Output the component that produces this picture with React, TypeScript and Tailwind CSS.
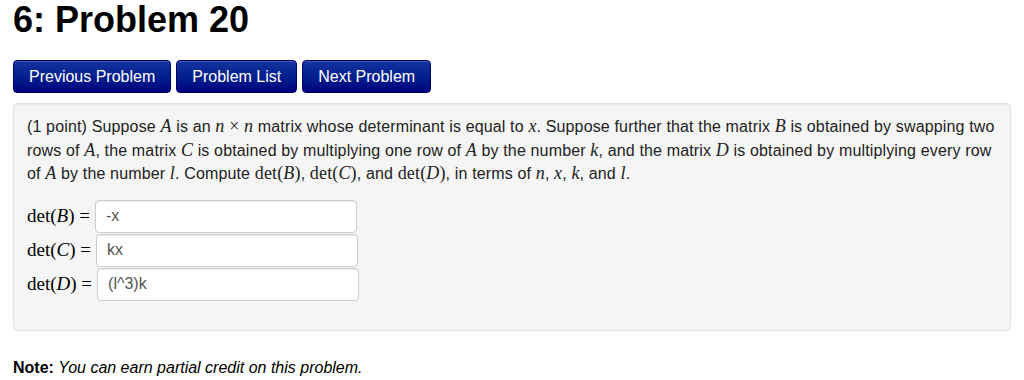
import React from 'react';

const M = ({ children }: { children: React.ReactNode }) => (
  <span className="font-['Liberation_Serif',serif] italic text-[18px]">{children}</span>
);

const R = ({ children }: { children: React.ReactNode }) => (
  <span className="font-['Liberation_Serif',serif] text-[18px]">{children}</span>
);

function Det({ v }: { v: string }) {
  return (
    <R>
      det(<M>{v}</M>)
    </R>
  );
}

function AnswerRow({ v, value }: { v: string; value: string }) {
  return (
    <div className="flex items-center">
      <span className="font-['Liberation_Serif',serif] text-[19px] text-black whitespace-nowrap mr-[5px]">
        det(<span className="italic">{v}</span>) =
      </span>
      <input
        readOnly
        value={value}
        className="w-[262px] h-[33px] bg-white border border-[#cccccc] rounded-[4px] px-[10px] text-[16px] text-[#555] font-['Liberation_Sans',sans-serif] shadow-[inset_0_1px_1px_rgba(0,0,0,0.075)] outline-none"
      />
    </div>
  );
}

const buttons = ['Previous Problem', 'Problem List', 'Next Problem'];

export default function App() {
  return (
    <div className="w-[1024px] h-[380px] bg-white font-['Liberation_Sans',sans-serif] text-[#222] px-[13px] overflow-hidden">
      <h1 className="text-[36px] font-bold leading-[40px] text-black">6: Problem 20</h1>

      <div className="flex gap-[5px] mt-[20px]">
        {buttons.map((b) => (
          <button
            key={b}
            className="h-[33px] px-[15px] rounded-[4px] text-white text-[16px] bg-gradient-to-b from-[#14349f] to-[#00007e] border border-[#000066] shadow-[inset_0_1px_0_rgba(255,255,255,0.2)]"
          >
            {b}
          </button>
        ))}
      </div>

      <div className="mt-[10px] h-[228px] bg-[#f5f5f5] border border-[#e3e3e3] rounded-[4px] shadow-[inset_0_1px_1px_rgba(0,0,0,0.05)] px-[13px] pt-[11px]">
        <div className="text-[16px] leading-[22.5px] tracking-[0.15px] text-[#222]">
          <div className="whitespace-nowrap">
            (1 point) Suppose <M>A</M> is an <M>n</M> <R>×</R> <M>n</M> matrix whose determinant is equal to <M>x</M>. Suppose further that the matrix <M>B</M> is obtained by swapping two
          </div>
          <div className="whitespace-nowrap">
            rows of <M>A</M>, the matrix <M>C</M> is obtained by multiplying one row of <M>A</M> by the number <M>k</M>, and the matrix <M>D</M> is obtained by multiplying every row
          </div>
          <div className="whitespace-nowrap">
            of <M>A</M> by the number <M>l</M>. Compute <Det v="B" />, <Det v="C" />, and <Det v="D" />, in terms of <M>n</M>, <M>x</M>, <M>k</M>, and <M>l</M>.
          </div>
        </div>

        <div className="mt-[14px] flex flex-col gap-[1px]">
          <AnswerRow v="B" value="-x" />
          <AnswerRow v="C" value="kx" />
          <AnswerRow v="D" value="(l^3)k" />
        </div>
      </div>

      <p className="mt-[25px] text-[16px] text-black">
        <b>Note:</b> <i>You can earn partial credit on this problem.</i>
      </p>
    </div>
  );
}
